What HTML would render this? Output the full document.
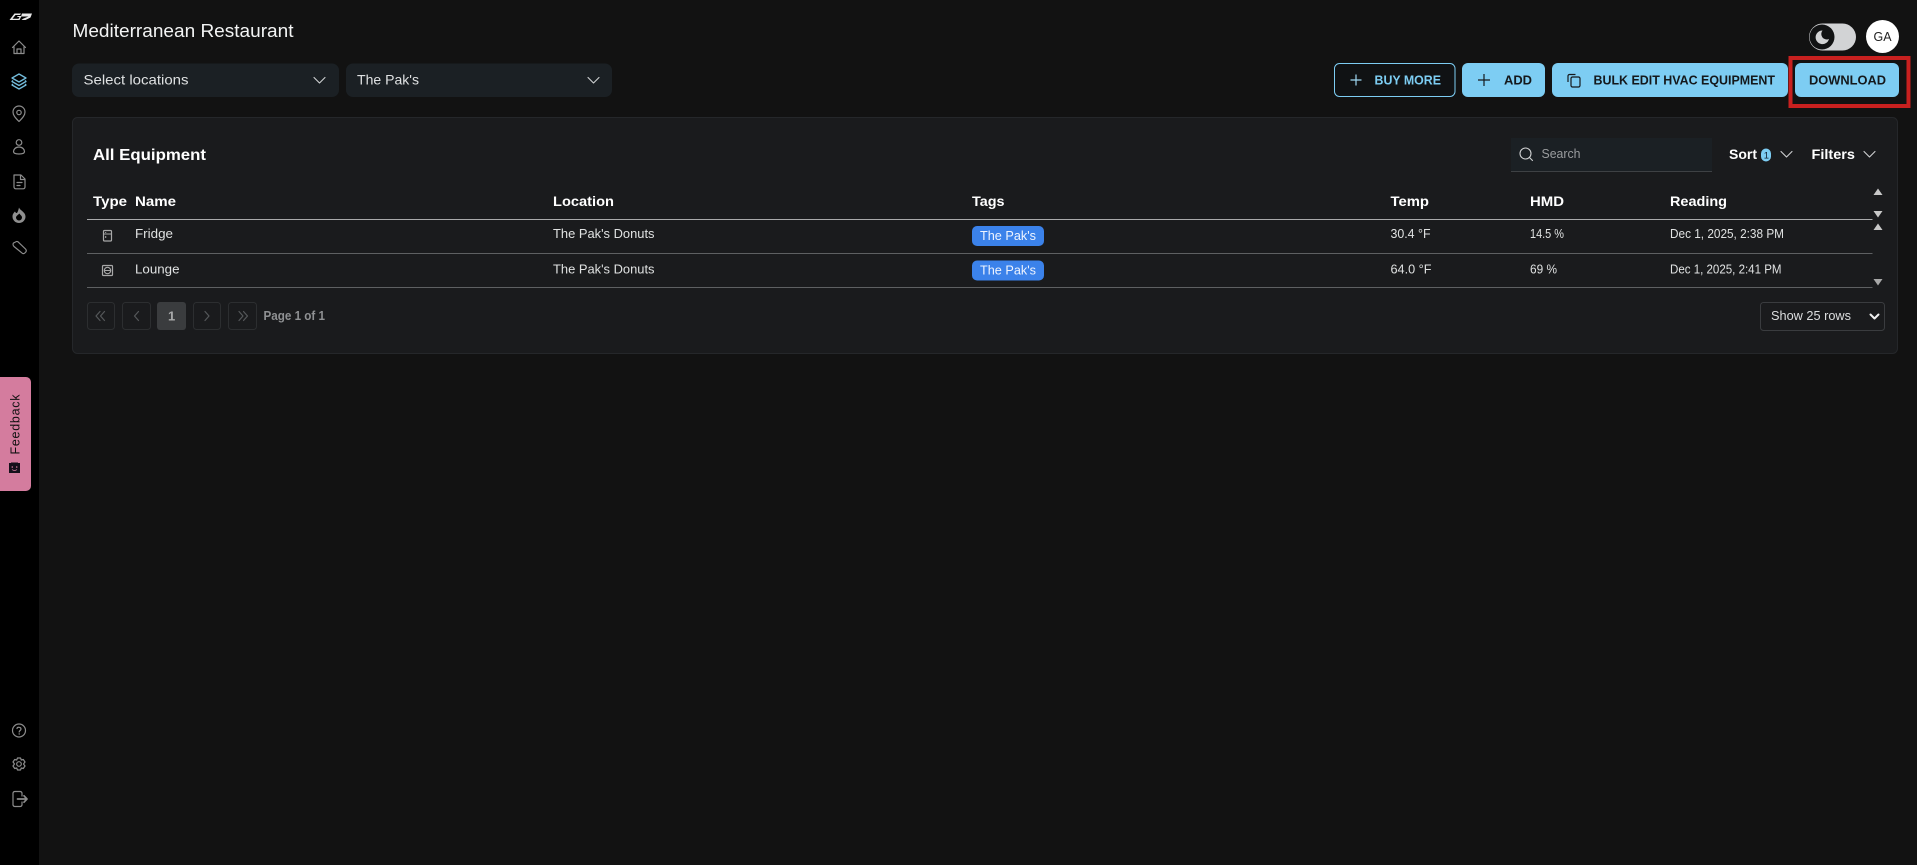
<!DOCTYPE html>
<html><head><meta charset="utf-8"><title>Equipment</title>
<style>
html,body{margin:0;padding:0;background:#121212;width:1917px;height:865px;overflow:hidden}
svg{display:block}
text{font-family:"Liberation Sans",sans-serif;fill:#eceded}
.b{font-weight:700;fill:#fff}
.h{font-weight:700;font-size:14px;fill:#fff}
.r{font-size:13px;fill:#e0e2e2}
.btn{font-weight:700;font-size:12.5px;fill:#14181b}
.ic{fill:none;stroke:#8c8c8c;stroke-width:1.2;stroke-linecap:round;stroke-linejoin:round}
.ch{fill:none;stroke:#cfd1d2;stroke-width:1.1;stroke-linecap:round;stroke-linejoin:round}
.pg{fill:none;stroke:#2c2e30;stroke-width:1}
.pa{fill:none;stroke:#55585a;stroke-width:1.2;stroke-linecap:round;stroke-linejoin:round}
</style></head>
<body>
<svg width="1917" height="865" viewBox="0 0 1917 865" xmlns="http://www.w3.org/2000/svg">
<rect width="1917" height="865" fill="#121212"/>
<rect width="39" height="865" fill="#000"/>

<!-- logo -->
<path d="M9.500 20 L14.500 13.500 H21 L20 15 H15.500 L12.500 18.800 H18.500 L19.500 17 H17 L17.700 16 H21.500 L19.500 20 Z" fill="#e6e6e6"/>
<path d="M22 13.500 H32 L30.500 17.500 L25.500 20 H21.500 L23 18.800 L28.500 16.500 H21 Z" fill="#e6e6e6"/>

<!-- home -->
<path class="ic" d="M12.500 47.500 L19 41 L25.500 47.500 M14 46.500 V53.500 H24 V46.500 M17 53.500 V49 H21 V53.500"/>
<!-- layers -->
<g fill="none" stroke="#73bcdc" stroke-width="1.300" stroke-linejoin="round">
<path d="M19 74 L26 78 L19 82 L12 78 Z"/>
<path d="M13 80.500 L12 81.500 L19 85.500 L26 81.500 L25 80.500"/>
<path d="M13 84 L12 85 L19 89 L26 85 L25 84"/>
</g>
<!-- pin -->
<path class="ic" d="M19 121.500 C15 117.500 13 115 13 112 A6 6 0 0 1 25 112 C25 115 23 117.500 19 121.500 Z"/>
<circle class="ic" cx="19" cy="112.500" r="2.200"/>
<!-- person -->
<circle class="ic" cx="19" cy="142.500" r="2.800"/>
<path class="ic" d="M19 147 C15.500 147 13.500 149.500 13.500 151.500 C13.500 153.500 16 154 19 154 C22 154 24.500 153.500 24.500 151.500 C24.500 149.500 22.500 147 19 147 Z"/>
<!-- document -->
<path class="ic" d="M14 175 H21 L25 179 V187 A1.800 1.800 0 0 1 23.200 188.800 H15.800 A1.800 1.800 0 0 1 14 187 Z M20.500 175 V179.500 H25 M17 182.500 H22 M17 185.500 H20"/>
<!-- flame -->
<path d="M19 207.500 C19.500 210 25.500 212 25.500 216.500 A6.500 6.500 0 0 1 12.500 216.500 C12.500 214 14 212.500 15 211.500 C15.500 212.800 16.200 213 17 213 C18 211.500 18.500 209.500 19 207.500 Z" fill="#8f8f8f"/>
<path d="M19.500 213.500 C20 215 22 215.500 22 217.500 A3 3 0 0 1 16 217.500 C16 216 18 215 19.500 213.500 Z" fill="#000"/>
<!-- tag -->
<path class="ic" d="M13.500 243 L16.500 241.500 C17 241.300 17.500 241.500 18 241.800 L25.500 249 C26.500 250 26.500 251 25.800 252 L24.800 253 C24 253.800 23 253.800 22.200 253.200 L14 246.500 C13 245.500 12.800 244 13.500 243 Z"/>

<!-- feedback -->
<path d="M0 377 H26 A5 5 0 0 1 31 382 V486 A5 5 0 0 1 26 491 H0 Z" fill="#d47c9e"/>
<text transform="translate(19.500 454.500) rotate(-90)" font-size="12.500" style="fill:#111" textLength="60" lengthAdjust="spacing">Feedback</text>
<path d="M9 463 H11 V462.500 H18 V463 H20 V473 H9 Z" fill="#15101a"/>
<circle cx="12.300" cy="467" r=".8" fill="#d47c9e"/><circle cx="16.700" cy="467" r=".8" fill="#d47c9e"/>
<path d="M12 469.500 Q14.500 471.500 17 469.500" fill="none" stroke="#d47c9e" stroke-width=".8"/>

<!-- bottom icons -->
<circle class="ic" cx="19" cy="730.500" r="6.500"/>
<path class="ic" d="M17 728.500 C17.300 726.800 21 726.800 21 729 C21 730.500 19.300 730.500 19.200 732"/>
<circle cx="19.200" cy="734" r=".7" fill="#8c8c8c"/>
<path class="ic" d="M17.500 758 H20.500 L21.300 760 L23.300 759.500 L25 762 L23.500 764 L25 766 L23.300 768.500 L21.300 768 L20.500 770 H17.500 L16.700 768 L14.700 768.500 L13 766 L14.500 764 L13 762 L14.700 759.500 L16.700 760 Z"/>
<circle class="ic" cx="19" cy="764" r="2.300"/>
<path class="ic" d="M22 796 V793 A2 2 0 0 0 20 791.500 H15 A2 2 0 0 0 13 793 V805 A2 2 0 0 0 15 806.500 H20 A2 2 0 0 0 22 805 V802"/>
<path d="M17.500 799 H25 M24 795.800 L27 799 L24 802.200" fill="none" stroke="#8c8c8c" stroke-width="1.700" stroke-linecap="round" stroke-linejoin="round"/>

<!-- title -->
<text x="72.500" y="37" font-size="18.500" style="fill:#f3f4f4" textLength="221" lengthAdjust="spacingAndGlyphs">Mediterranean Restaurant</text>

<!-- toggle & avatar -->
<rect x="1809" y="23.500" width="47" height="27" rx="13.500" fill="#d2d3d5"/>
<circle cx="1822" cy="37" r="12.500" fill="#121314"/>
<path d="M1822.500 30.500 A6.800 6.800 0 1 0 1829 39 A5.500 5.500 0 0 1 1822.500 30.500 Z" fill="#d2d3d5"/>
<circle cx="1882.500" cy="36.500" r="16.500" fill="#fff"/>
<text x="1873.500" y="41" font-size="12.500" style="fill:#222" textLength="18" lengthAdjust="spacingAndGlyphs">GA</text>

<!-- selects -->
<rect x="72" y="63.500" width="267" height="33.500" rx="7" fill="#1b2024"/>
<text x="83.500" y="84.500" font-size="14" style="fill:#dfe1e2" textLength="105" lengthAdjust="spacingAndGlyphs">Select locations</text>
<path class="ch" d="M314 77.500 L319.500 83 L325 77.500"/>
<rect x="346" y="63.500" width="266" height="33.500" rx="7" fill="#1b2024"/>
<text x="357" y="84.500" font-size="14" style="fill:#dfe1e2" textLength="62" lengthAdjust="spacingAndGlyphs">The Pak's</text>
<path class="ch" d="M588 77.500 L593.500 83 L599 77.500"/>

<!-- buttons -->
<rect x="1334.500" y="63.500" width="120.500" height="33" rx="5" fill="#101214" stroke="#7dcdf3" stroke-width="1"/>
<path d="M1350.500 80 H1361.500 M1356 74.500 V85.500" fill="none" stroke="#9fd8f2" stroke-width="1.200"/>
<text x="1374.500" y="84.500" font-size="12.500" class="b" style="fill:#7dcdf3" textLength="66.500" lengthAdjust="spacingAndGlyphs">BUY MORE</text>

<rect x="1462" y="63" width="83" height="34" rx="6" fill="#7dcdf3"/>
<path d="M1478 80 H1490 M1484 74 V86" fill="none" stroke="#15191c" stroke-width="1.200"/>
<text x="1504" y="84.500" class="btn" textLength="28" lengthAdjust="spacingAndGlyphs">ADD</text>

<rect x="1552" y="63" width="236" height="34" rx="6" fill="#7dcdf3"/>
<path d="M1568 82 V76 A1.500 1.500 0 0 1 1569.500 74.500 H1575.500" fill="none" stroke="#15191c" stroke-width="1.200"/>
<rect x="1571" y="77" width="9" height="10" rx="1.500" fill="none" stroke="#15191c" stroke-width="1.200"/>
<text x="1593.500" y="84.500" class="btn" textLength="181.500" lengthAdjust="spacingAndGlyphs">BULK EDIT HVAC EQUIPMENT</text>

<rect x="1795" y="63" width="104" height="34" rx="6" fill="#7dcdf3"/>
<text x="1809" y="84.500" class="btn" textLength="77" lengthAdjust="spacingAndGlyphs">DOWNLOAD</text>
<rect x="1790.500" y="58" width="118" height="48" fill="none" stroke="#c8201f" stroke-width="4"/>

<!-- card -->
<rect x="72.500" y="117.500" width="1825" height="236" rx="5" fill="#1a1b1d" stroke="#25272a" stroke-width="1"/>
<text x="93" y="160" font-size="15.500" class="b" textLength="113" lengthAdjust="spacingAndGlyphs">All Equipment</text>

<!-- search -->
<rect x="1511" y="138" width="201" height="33" fill="#1b2024"/>
<rect x="1511" y="171" width="201" height="1" fill="#3e4144"/>
<circle cx="1525.500" cy="153.500" r="5.500" fill="none" stroke="#cfd1d2" stroke-width="1.100"/>
<path d="M1529.500 157.500 L1532.500 160.500" stroke="#cfd1d2" stroke-width="1.100" stroke-linecap="round"/>
<text x="1541.500" y="158" font-size="12.500" style="fill:#9a9c9e" textLength="39" lengthAdjust="spacingAndGlyphs">Search</text>

<text x="1729" y="159" class="h" textLength="28" lengthAdjust="spacingAndGlyphs">Sort</text>
<rect x="1761" y="148.500" width="10" height="13" rx="5" fill="#7dcdf3"/>
<text x="1763.800" y="158.500" font-size="9.500" style="fill:#123">1</text>
<path class="ch" d="M1781 151.500 L1786.500 157 L1792 151.500"/>
<text x="1811.500" y="159" class="h" textLength="43.500" lengthAdjust="spacingAndGlyphs">Filters</text>
<path class="ch" d="M1864 151.500 L1869.500 157 L1875 151.500"/>

<!-- table header -->
<text x="93" y="206" class="h" textLength="34" lengthAdjust="spacingAndGlyphs">Type</text>
<text x="135" y="206" class="h" textLength="41" lengthAdjust="spacingAndGlyphs">Name</text>
<text x="553" y="206" class="h" textLength="61" lengthAdjust="spacingAndGlyphs">Location</text>
<text x="972" y="206" class="h" textLength="32.500" lengthAdjust="spacingAndGlyphs">Tags</text>
<text x="1390.500" y="206" class="h" textLength="38.500" lengthAdjust="spacingAndGlyphs">Temp</text>
<text x="1530" y="206" class="h" textLength="34" lengthAdjust="spacingAndGlyphs">HMD</text>
<text x="1670" y="206" class="h" textLength="57" lengthAdjust="spacingAndGlyphs">Reading</text>

<path d="M1873.500 195 L1878 188.500 L1882.500 195 Z M1873.500 211 L1878 217.500 L1882.500 211 Z M1873.500 230 L1878 223.500 L1882.500 230 Z" fill="#c8c8c8"/>
<path d="M1873.500 279 L1878 285.500 L1882.500 279 Z" fill="#a8a8a8"/>

<rect x="87" y="219" width="1785.500" height="1" fill="#a9aaab"/>
<rect x="87" y="253" width="1785.500" height="1" fill="#5e6062"/>
<rect x="87" y="287" width="1785.500" height="1" fill="#5e6062"/>

<!-- row 1 -->
<rect x="103.500" y="230.500" width="8" height="10.500" rx="1" fill="none" stroke="#a8a8a8" stroke-width="1.200"/>
<path d="M103.500 234 H111.500 M105.700 232 V233 M105.700 236 V238" stroke="#a8a8a8" stroke-width="1"/>
<text x="135" y="238" class="r" textLength="38" lengthAdjust="spacingAndGlyphs">Fridge</text>
<text x="553" y="238" class="r" textLength="101.500" lengthAdjust="spacingAndGlyphs">The Pak's Donuts</text>
<rect x="972" y="226" width="72" height="20" rx="5" fill="#3b82ea"/>
<text x="980" y="240" font-size="13" style="fill:#eef4ff" textLength="56" lengthAdjust="spacingAndGlyphs">The Pak's</text>
<text x="1390.500" y="238" class="r" textLength="40" lengthAdjust="spacingAndGlyphs">30.4 °F</text>
<text x="1530" y="238" class="r" textLength="34" lengthAdjust="spacingAndGlyphs">14.5 %</text>
<text x="1670" y="238" class="r" textLength="114" lengthAdjust="spacingAndGlyphs">Dec 1, 2025, 2:38 PM</text>

<!-- row 2 -->
<rect x="102.500" y="265.500" width="10" height="10" rx="1" fill="none" stroke="#a8a8a8" stroke-width="1.200"/>
<circle cx="107.500" cy="270.500" r="3.200" fill="none" stroke="#a8a8a8" stroke-width="1.200"/>
<path d="M104.500 270.500 H110.500" stroke="#a8a8a8" stroke-width="1"/>
<text x="135" y="273.300" class="r" textLength="44.500" lengthAdjust="spacingAndGlyphs">Lounge</text>
<text x="553" y="273.300" class="r" textLength="101.500" lengthAdjust="spacingAndGlyphs">The Pak's Donuts</text>
<rect x="972" y="260.500" width="72" height="20" rx="5" fill="#3b82ea"/>
<text x="980" y="274.500" font-size="13" style="fill:#eef4ff" textLength="56" lengthAdjust="spacingAndGlyphs">The Pak's</text>
<text x="1390.500" y="273.300" class="r" textLength="41" lengthAdjust="spacingAndGlyphs">64.0 °F</text>
<text x="1530" y="273.300" class="r" textLength="27" lengthAdjust="spacingAndGlyphs">69 %</text>
<text x="1670" y="273.300" class="r" textLength="111.500" lengthAdjust="spacingAndGlyphs">Dec 1, 2025, 2:41 PM</text>

<!-- pager -->
<rect class="pg" x="87.500" y="302.500" width="27" height="27" rx="3"/>
<path class="pa" d="M100 311.500 L96 316 L100 320.500 M104.500 311.500 L100.500 316 L104.500 320.500"/>
<rect class="pg" x="122.500" y="302.500" width="28" height="27" rx="3"/>
<path class="pa" d="M138.500 311.500 L134.500 316 L138.500 320.500"/>
<rect x="157" y="302" width="29" height="28" rx="3" fill="#3a3c3e"/>
<text x="168" y="320.500" font-size="13" class="b" style="fill:#a9aaab">1</text>
<rect class="pg" x="193.500" y="302.500" width="27" height="27" rx="3"/>
<path class="pa" d="M205 311.500 L209 316 L205 320.500"/>
<rect class="pg" x="228.500" y="302.500" width="28" height="27" rx="3"/>
<path class="pa" d="M239 311.500 L243 316 L239 320.500 M243.500 311.500 L247.500 316 L243.500 320.500"/>
<text x="263.500" y="320" font-size="13" style="fill:#8f9193;font-weight:700" textLength="61.500" lengthAdjust="spacingAndGlyphs">Page 1 of 1</text>

<!-- rows select -->
<rect x="1760.500" y="302.500" width="124" height="28" rx="3" fill="#1a1b1d" stroke="#3a3c3f" stroke-width="1"/>
<text x="1771" y="320" font-size="13" style="fill:#dcdedf" textLength="80" lengthAdjust="spacingAndGlyphs">Show 25 rows</text>
<path d="M1870.500 314.500 L1874.500 318.500 L1878.500 314.500" fill="none" stroke="#f0f0f0" stroke-width="2" stroke-linecap="round" stroke-linejoin="round"/>
</svg>
</body></html>
